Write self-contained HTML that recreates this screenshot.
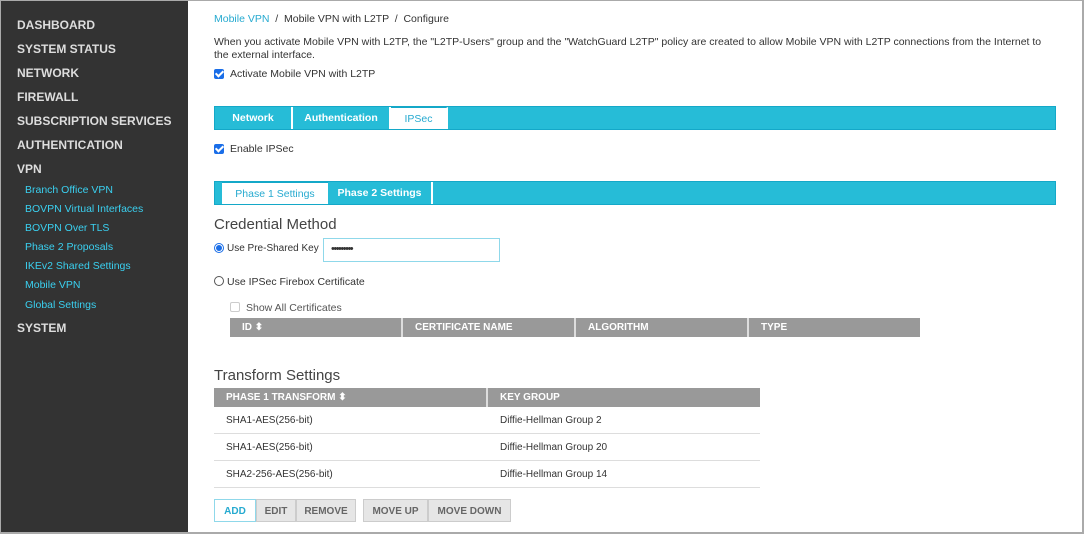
<!DOCTYPE html>
<html><head><meta charset="utf-8"><style>
*{margin:0;padding:0;box-sizing:border-box}
body{width:1084px;height:534px;position:relative;overflow:hidden;background:#fff;font-family:"Liberation Sans",sans-serif;font-size:10.5px;color:#333}
.a{position:absolute;white-space:nowrap}
#frame{position:absolute;left:0;top:0;width:1084px;height:534px;border:1px solid #aaa;border-right:2px solid #aaa;border-bottom:2px solid #aaa;pointer-events:none}
#side{position:absolute;left:0;top:0;width:188px;height:534px;background:#333}
.h{position:absolute;left:17px;color:#ddd;font-weight:bold;font-size:12px}
.s{position:absolute;left:25px;color:#3ad0f0;font-size:10.5px}
.bar{position:absolute;left:214px;width:842px;height:24px;background:#26bcd7;border:1px solid #14a8c8}
.tab{position:absolute;top:0;height:22px;line-height:22px;text-align:center;color:#fff;font-weight:bold;font-size:10.5px;border-right:2px solid #fff}
.tab.act{background:#fff;color:#26aad0;font-weight:normal;border-top:1px solid #14a8c8}
.cb{position:absolute;width:10px;height:10px;background:#1a6ee8;border-radius:2px}
.cb:after{content:"";position:absolute;left:3px;top:0px;width:3px;height:6px;border:solid #fff;border-width:0 2px 2px 0;transform:rotate(45deg)}
.th{position:absolute;height:19px;background:#999;color:#fff;font-weight:bold;font-size:10px;line-height:20px;padding-left:12px;border-right:2px solid #ddd}
.row{position:absolute;left:214px;width:546px;height:27px;border-bottom:1px solid #ddd;font-size:10px;line-height:28px}
.btn{position:absolute;top:499px;height:23px;line-height:23px;background:#e6e6e6;border:1px solid #ccc;color:#666;font-weight:bold;font-size:10px;text-align:center}
</style></head><body>
<div id="side">
<div class="h" style="top:18px">DASHBOARD</div>
<div class="h" style="top:42px">SYSTEM STATUS</div>
<div class="h" style="top:66px">NETWORK</div>
<div class="h" style="top:90px">FIREWALL</div>
<div class="h" style="top:114px">SUBSCRIPTION SERVICES</div>
<div class="h" style="top:138px">AUTHENTICATION</div>
<div class="h" style="top:162px">VPN</div>
<div class="s" style="top:184px">Branch Office VPN</div>
<div class="s" style="top:203px">BOVPN Virtual Interfaces</div>
<div class="s" style="top:222px">BOVPN Over TLS</div>
<div class="s" style="top:241px">Phase 2 Proposals</div>
<div class="s" style="top:260px">IKEv2 Shared Settings</div>
<div class="s" style="top:279px">Mobile VPN</div>
<div class="s" style="top:299px">Global Settings</div>
<div class="h" style="top:321px">SYSTEM</div>
</div>

<div class="a" style="left:214px;top:13px"><span style="color:#26aad0">Mobile VPN</span> &nbsp;/&nbsp; Mobile VPN with L2TP &nbsp;/&nbsp; Configure</div>
<div class="a" style="left:214px;top:36px;line-height:13px;white-space:normal;width:835px">When you activate Mobile VPN with L2TP, the "L2TP-Users" group and the "WatchGuard L2TP" policy are created to allow Mobile VPN with L2TP connections from the Internet to the external interface.</div>
<div class="cb" style="left:214px;top:69px"></div>
<div class="a" style="left:230px;top:68px">Activate Mobile VPN with L2TP</div>

<div class="bar" style="top:106px">
<div class="tab" style="left:0;width:78px">Network</div>
<div class="tab" style="left:78px;width:98px">Authentication</div>
<div class="tab act" style="left:176px;width:57px">IPSec</div>
</div>
<div class="cb" style="left:214px;top:144px"></div>
<div class="a" style="left:230px;top:143px">Enable IPSec</div>

<div class="bar" style="top:181px">
<div class="tab act" style="left:7px;width:106px;border-right:none">Phase 1 Settings</div>
<div class="tab" style="left:113px;width:105px">Phase 2 Settings</div>
</div>

<div class="a" style="left:214px;top:216px;font-size:15px;color:#444">Credential Method</div>
<div class="a" style="left:214px;top:243px;width:10px;height:10px;border:1px solid #1a6ee8;border-radius:50%"><div style="position:absolute;left:1px;top:1px;width:6px;height:6px;background:#1a6ee8;border-radius:50%"></div></div>
<div class="a" style="left:227px;top:243px;font-size:10px">Use Pre-Shared Key</div>
<div class="a" style="left:323px;top:238px;width:177px;height:24px;border:1px solid #8fd8ea;padding-left:7px;line-height:21px;font-size:11px;letter-spacing:-1.5px">•••••••••</div>
<div class="a" style="left:214px;top:276px;width:10px;height:10px;border:1px solid #555;border-radius:50%"></div>
<div class="a" style="left:227px;top:276px">Use IPSec Firebox Certificate</div>
<div class="a" style="left:230px;top:302px;width:10px;height:10px;border:1px solid #ccc;border-radius:2px"></div>
<div class="a" style="left:246px;top:302px;color:#555">Show All Certificates</div>
<div class="th" style="left:230px;top:318px;width:173px">ID ⬍</div>
<div class="th" style="left:403px;top:318px;width:173px">CERTIFICATE NAME</div>
<div class="th" style="left:576px;top:318px;width:173px">ALGORITHM</div>
<div class="th" style="left:749px;top:318px;width:171px;border-right:none">TYPE</div>

<div class="a" style="left:214px;top:367px;font-size:15px;color:#444">Transform Settings</div>
<div class="th" style="left:214px;top:388px;width:274px">PHASE 1 TRANSFORM ⬍</div>
<div class="th" style="left:488px;top:388px;width:272px;border-right:none">KEY GROUP</div>
<div class="row" style="top:407px"><span class="a" style="left:12px">SHA1-AES(256-bit)</span><span class="a" style="left:286px">Diffie-Hellman Group 2</span></div>
<div class="row" style="top:434px"><span class="a" style="left:12px">SHA1-AES(256-bit)</span><span class="a" style="left:286px">Diffie-Hellman Group 20</span></div>
<div class="row" style="top:461px"><span class="a" style="left:12px">SHA2-256-AES(256-bit)</span><span class="a" style="left:286px">Diffie-Hellman Group 14</span></div>

<div class="btn" style="left:214px;width:42px;background:#fff;border-color:#8fd8ea;color:#26aad0">ADD</div>
<div class="btn" style="left:256px;width:40px">EDIT</div>
<div class="btn" style="left:296px;width:60px">REMOVE</div>
<div class="btn" style="left:363px;width:65px">MOVE UP</div>
<div class="btn" style="left:428px;width:83px">MOVE DOWN</div>

<div id="frame"></div>
</body></html>
